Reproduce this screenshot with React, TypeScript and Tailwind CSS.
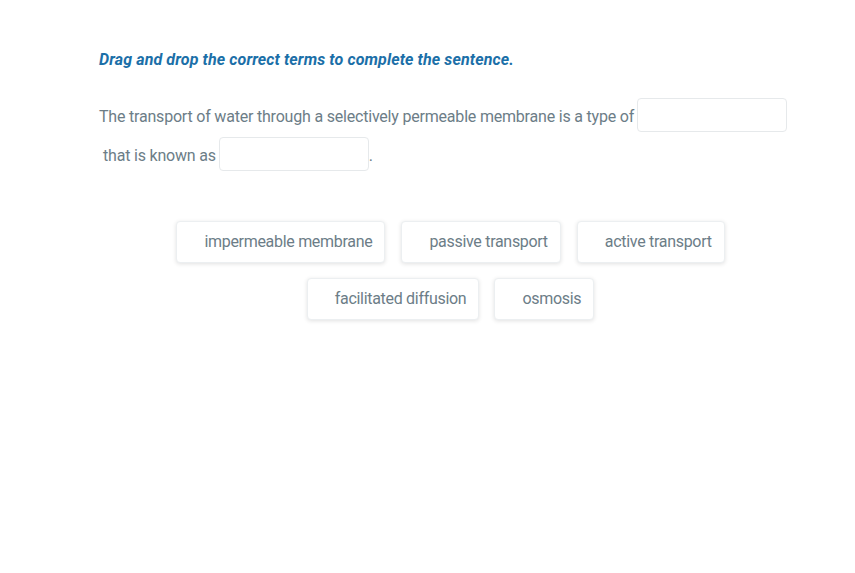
const sansStack = "font-['Roboto','Liberation_Sans',sans-serif]";

function Blank({ className = "" }: { className?: string }) {
  return (
    <span
      className={`inline-block w-[150px] h-[34px] rounded-[4px] border border-[#e6e9eb] bg-white align-middle ${className}`}
    />
  );
}

function Chip({ label }: { label: string }) {
  return (
    <div className="h-[42px] flex items-center pl-[27px] pr-[12px] rounded-[4px] border border-[#eceff1] bg-white shadow-[0_1px_4px_rgba(0,0,0,0.12)] text-[16px] text-[#6c7d87] tracking-[-0.3px]">
      {label}
    </div>
  );
}

export default function App() {
  return (
    <div className={`min-h-screen bg-white ${sansStack}`}>
      <div className="w-[703px] ml-[99px] pt-[50px]">
        <h2 className="text-[16px] font-bold italic text-[#1b6fa8] leading-[20px] tracking-[0.12px]">
          Drag and drop the correct terms to complete the sentence.
        </h2>

        <div className="mt-[28px] text-[16px] text-[#6c7d87] tracking-[-0.2px]">
          <div className="flex items-center h-[34px]">
            <span className="pt-[3px]">The transport of water through a selectively permeable membrane is a type of</span>
            <Blank className="ml-[3px]" />
          </div>
          <div className="flex items-center h-[34px] mt-[5px] pl-[4px]">
            <span className="pt-[3px]">that is known as</span>
            <Blank className="ml-[3px]" />
            <span className="pt-[3px]">.</span>
          </div>
        </div>

        <div className="mt-[50px] flex flex-col items-center gap-[15px]">
          <div className="flex gap-[16px]">
            <Chip label="impermeable membrane" />
            <Chip label="passive transport" />
            <Chip label="active transport" />
          </div>
          <div className="flex gap-[15px]">
            <Chip label="facilitated diffusion" />
            <Chip label="osmosis" />
          </div>
        </div>
      </div>
    </div>
  );
}
